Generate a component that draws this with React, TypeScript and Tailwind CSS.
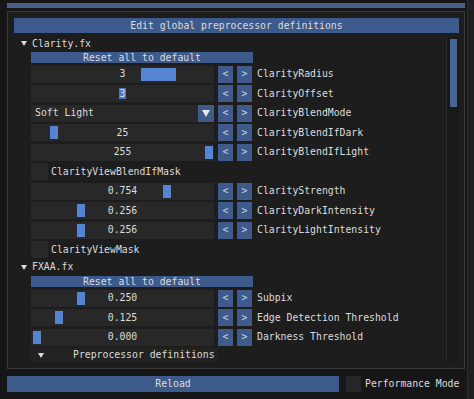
import React from "react";

type Row =
  | { kind: "slider"; value: string; grab: number; grabW?: number; label: string }
  | { kind: "input"; value: string; label: string }
  | { kind: "combo"; value: string; label: string }
  | { kind: "check"; label: string };

const clarityRows: Row[] = [
  { kind: "slider", value: "3", grab: 110, grabW: 35, label: "ClarityRadius" },
  { kind: "input", value: "3", label: "ClarityOffset" },
  { kind: "combo", value: "Soft Light", label: "ClarityBlendMode" },
  { kind: "slider", value: "25", grab: 19, label: "ClarityBlendIfDark" },
  { kind: "slider", value: "255", grab: 174, label: "ClarityBlendIfLight" },
  { kind: "check", label: "ClarityViewBlendIfMask" },
  { kind: "slider", value: "0.754", grab: 132, label: "ClarityStrength" },
  { kind: "slider", value: "0.256", grab: 46, label: "ClarityDarkIntensity" },
  { kind: "slider", value: "0.256", grab: 46, label: "ClarityLightIntensity" },
  { kind: "check", label: "ClarityViewMask" },
];

const fxaaRows: Row[] = [
  { kind: "slider", value: "0.250", grab: 46, label: "Subpix" },
  { kind: "slider", value: "0.125", grab: 24, label: "Edge Detection Threshold" },
  { kind: "slider", value: "0.000", grab: 2, label: "Darkness Threshold" },
];

const Arrow = () => (
  <svg width="6" height="5" viewBox="0 0 6 5" className="shrink-0">
    <polygon points="0,0 6,0 3,5" fill="#dcdcdc" />
  </svg>
);

const StepButton = ({ ch }: { ch: string }) => (
  <div className="w-[15px] h-full bg-[#3e5b8c] flex items-center justify-center text-[#cfd8e8]">
    {ch}
  </div>
);

const Steppers = ({ label }: { label: string }) => (
  <>
    <div className="ml-[4px] h-full">
      <StepButton ch="<" />
    </div>
    <div className="ml-[4px] h-full">
      <StepButton ch=">" />
    </div>
    <span className="ml-[5px] whitespace-nowrap">{label}</span>
  </>
);

const RowItem = ({ row }: { row: Row }) => {
  if (row.kind === "check") {
    return (
      <div className="flex h-[17px] items-center">
        <div className="w-[17px] h-[17px] bg-[#282828]" />
        <span className="ml-[3px] whitespace-nowrap">{row.label}</span>
      </div>
    );
  }

  return (
    <div className="flex h-[17px] items-center">
      {/* frame */}
      <div className="relative w-[183px] h-full bg-[#282828] flex items-center">
        {row.kind === "slider" && (
          <>
            <div
              className="absolute top-[2px] bottom-[2px] bg-[#5585d2]"
              style={{ left: row.grab, width: row.grabW ?? 8 }}
            />
            <span className="relative w-full text-center">{row.value}</span>
          </>
        )}
        {row.kind === "input" && (
          <span className="w-full text-center">
            <span className="bg-[#4a78c8] px-[1px]">{row.value}</span>
          </span>
        )}
        {row.kind === "combo" && (
          <>
            <span className="pl-[4px] flex-1">{row.value}</span>
            <div className="w-[16px] h-full bg-[#3e5b8c] flex items-center justify-center">
              <svg width="8" height="7" viewBox="0 0 8 7">
                <polygon points="0,0 8,0 4,7" fill="#e8e8e8" />
              </svg>
            </div>
          </>
        )}
      </div>
      <Steppers label={row.label} />
    </div>
  );
};

const TreeNode = ({ label }: { label: string }) => (
  <div className="flex h-[13px] items-center pl-[7px]">
    <Arrow />
    <span className="ml-[5px]">{label}</span>
  </div>
);

const ResetBar = () => (
  <div className="ml-[17px] w-[222px] h-[11px] bg-[#3d5a8c] flex items-center justify-center leading-none">
    Reset all to default
  </div>
);

const App = () => {
  return (
    <div
      className="w-[474px] h-[399px] bg-[#161616] text-[#dcdcdc] text-[9.8px] leading-none flex overflow-hidden"
      style={{ fontFamily: '"DejaVu Sans Mono", "Liberation Mono", monospace' }}
    >
      <div className="w-[467px] pl-[7px] pr-[2px] pt-[3px] flex flex-col">
        {/* top bar */}
        <div className="h-[5px] w-[458px] bg-[#4a5f8a]" />

        {/* main frame */}
        <div className="mt-[3px] w-[458px] h-[358px] border border-[#3a3a3a] bg-[#1d1d1d] pt-[6px] pl-[6px] pr-[5px] flex flex-col">
          <div className="h-[15px] bg-[#3d5a8c] flex items-center justify-center">
            Edit global preprocessor definitions
          </div>

          <div className="mt-[4px] h-[325px] flex">
            {/* scroll content */}
            <div className="flex-1 flex flex-col gap-[2.5px] overflow-hidden">
              <TreeNode label="Clarity.fx" />
              <ResetBar />
              {clarityRows.map((r, i) => (
                <div key={i} className="pl-[17px]">
                  <RowItem row={r} />
                </div>
              ))}
              <TreeNode label="FXAA.fx" />
              <ResetBar />
              {fxaaRows.map((r, i) => (
                <div key={i} className="pl-[17px]">
                  <RowItem row={r} />
                </div>
              ))}
              <div className="pl-[17px] flex">
                <div className="min-w-[185px] h-[14px] pr-[2px] bg-[#222222] flex items-center whitespace-nowrap">
                  <span className="ml-[7px]">
                    <Arrow />
                  </span>
                  <span className="ml-[29px]">Preprocessor definitions</span>
                </div>
              </div>
            </div>

            {/* scrollbar */}
            <div className="w-[13px] bg-[#191919] border-l border-[#2a2a2a] pt-[2px] flex justify-center">
              <div className="w-[7px] h-[68px] bg-[#4a6494]" />
            </div>
          </div>
        </div>

        {/* bottom row */}
        <div className="mt-[7px] flex h-[16px] items-center">
          <div className="w-[332px] h-full bg-[#3d5a8c] flex items-center justify-center">
            Reload
          </div>
          <div className="ml-[7px] w-[15px] h-full bg-[#262626]" />
          <span className="ml-[4px] whitespace-nowrap">Performance Mode</span>
        </div>
      </div>

      {/* outer scroll strip */}
      <div className="w-[7px] h-full border-l border-[#2e2e2e] bg-[#202020]" />
    </div>
  );
};

export default App;
